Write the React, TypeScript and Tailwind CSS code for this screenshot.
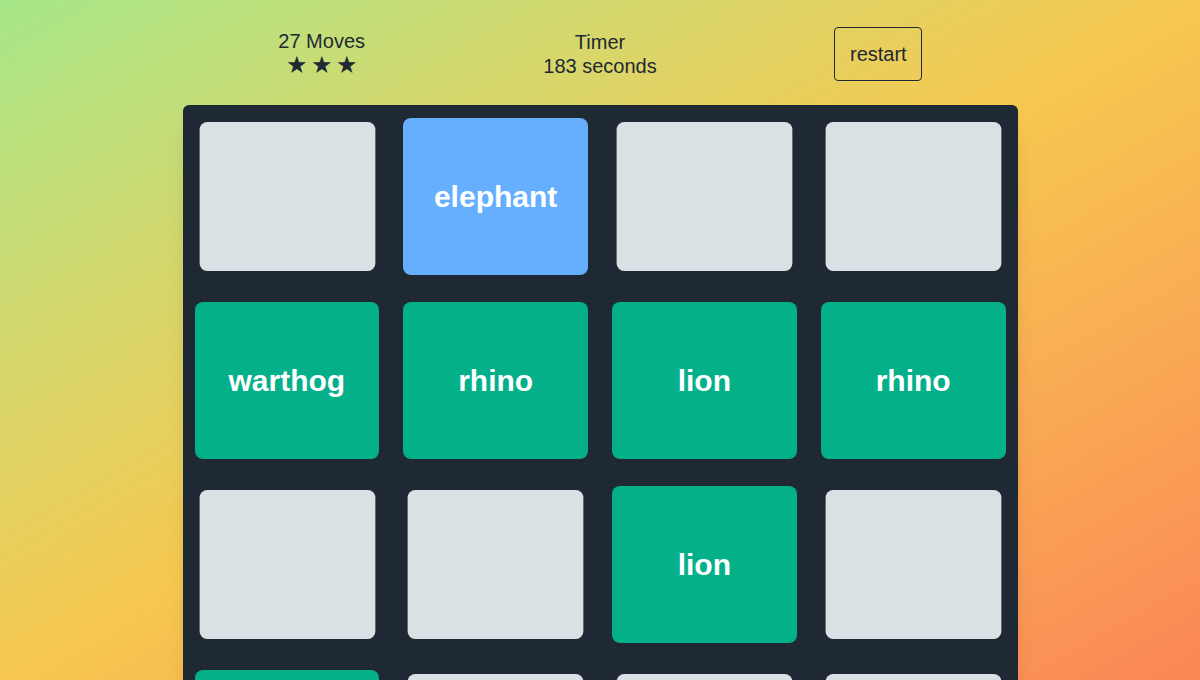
import React from "react";

type Card = { name: string; state: "closed" | "open" | "match" };

const CARDS: Card[] = [
  { name: "lion", state: "closed" },
  { name: "elephant", state: "open" },
  { name: "zebra", state: "closed" },
  { name: "giraffe", state: "closed" },
  { name: "warthog", state: "match" },
  { name: "rhino", state: "match" },
  { name: "lion", state: "match" },
  { name: "rhino", state: "match" },
  { name: "zebra", state: "closed" },
  { name: "giraffe", state: "closed" },
  { name: "lion", state: "match" },
  { name: "elephant", state: "closed" },
  { name: "warthog", state: "match" },
  { name: "hippo", state: "closed" },
  { name: "hippo", state: "closed" },
  { name: "buffalo", state: "closed" },
];

const Tile = ({ card }: { card: Card }) => {
  if (card.state === "closed") {
    return <div className="h-[157px] scale-95 rounded-lg bg-[#d9e1e5]" />;
  }
  const bg = card.state === "open" ? "bg-[#66afff]" : "bg-[#04b08a]";
  return (
    <div className={`flex h-[157px] items-center justify-center rounded-lg ${bg}`}>
      <span className="text-[30px] font-bold text-white">{card.name}</span>
    </div>
  );
};

export default function App() {
  return (
    <div
      className="h-[680px] overflow-hidden bg-linear-to-br from-[#a6e788] via-[#f6c84f] to-[#fa8656] text-[#1f2933]"
      style={{ fontFamily: '"Liberation Sans", Arial, sans-serif' }}
    >
      <div className="mx-auto grid w-[835px] grid-cols-3 items-center pt-[27px] text-[20px] leading-[24px]">
        <div className="flex flex-col items-center">
          <span className="leading-[22px]">27 Moves</span>
          <span className="flex gap-[3px] text-[24px] leading-[26px]">
            <span>★</span>
            <span>★</span>
            <span>★</span>
          </span>
        </div>
        <div className="flex flex-col items-center">
          <span>Timer</span>
          <span>183 seconds</span>
        </div>
        <div className="flex justify-center">
          <button className="h-[54px] w-[88px] rounded border border-[#1f2933] text-[20px]">restart</button>
        </div>
      </div>

      <div className="mx-auto mt-[24px] grid w-[835px] grid-cols-4 gap-x-[24px] gap-y-[27px] rounded-md bg-[#1f2933] px-[12px] pt-[13px] pb-[13px] shadow-xl">
        {CARDS.map((c, i) => (
          <Tile key={i} card={c} />
        ))}
      </div>
    </div>
  );
}
